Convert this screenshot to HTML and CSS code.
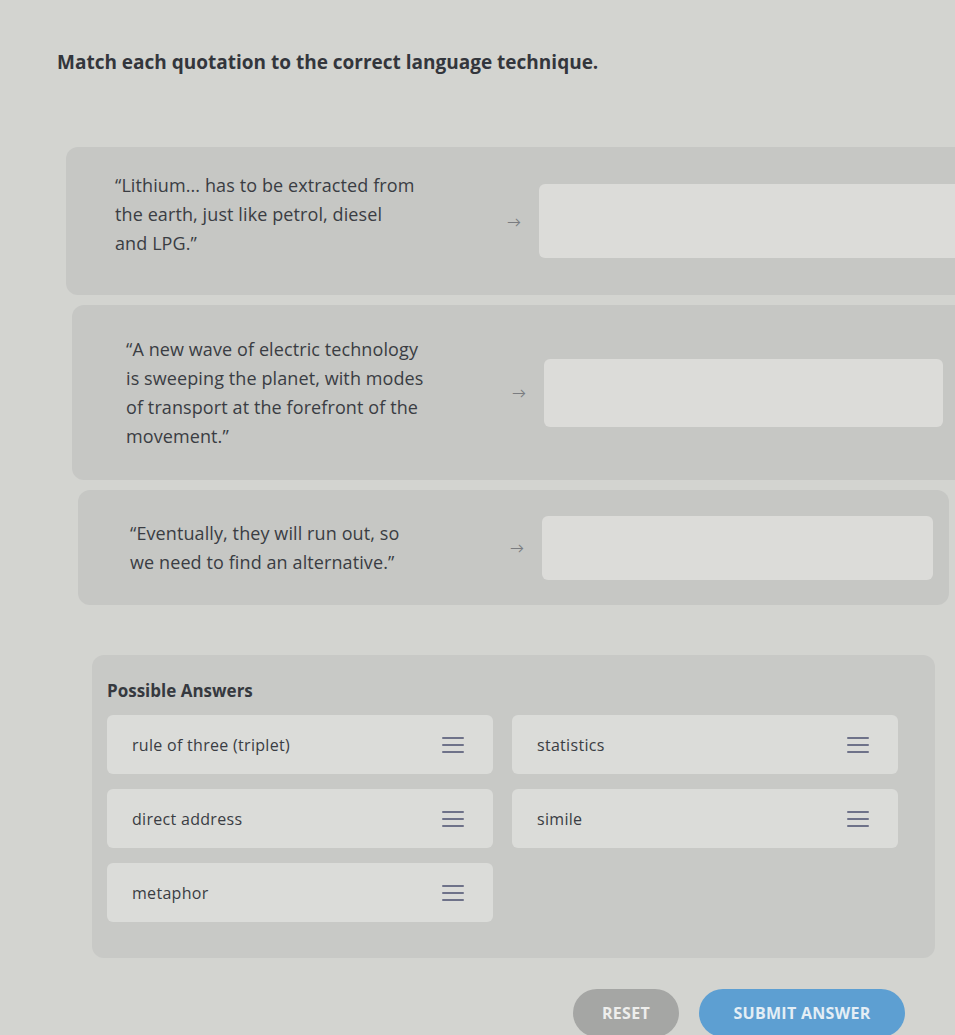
FILE: index.html
```html
<!DOCTYPE html>
<html>
<head>
<meta charset="utf-8">
<link rel="stylesheet" href="styles.css">
</head>
<body>
<div class="page">
  <h1 class="title">Match each quotation to the correct language technique.</h1>

  <div class="quotes">
    <div class="qcard q1">
      <div class="qtext">“Lithium... has to be extracted from<br>the earth, just like petrol, diesel<br>and LPG.”</div>
      <div class="arrow">&#8594;</div>
      <div class="drop"></div>
    </div>
    <div class="qcard q2">
      <div class="qtext">“A new wave of electric technology<br>is sweeping the planet, with modes<br>of transport at the forefront of the<br>movement.”</div>
      <div class="arrow">&#8594;</div>
      <div class="drop"></div>
    </div>
    <div class="qcard q3">
      <div class="qtext">“Eventually, they will run out, so<br>we need to find an alternative.”</div>
      <div class="arrow">&#8594;</div>
      <div class="drop"></div>
    </div>
  </div>

  <div class="answers">
    <div class="answers-title">Possible Answers</div>
    <div class="grid">
      <div class="item"><span>rule of three (triplet)</span><span class="handle"><i></i><i></i><i></i></span></div>
      <div class="item"><span>statistics</span><span class="handle"><i></i><i></i><i></i></span></div>
      <div class="item"><span>direct address</span><span class="handle"><i></i><i></i><i></i></span></div>
      <div class="item"><span>simile</span><span class="handle"><i></i><i></i><i></i></span></div>
      <div class="item"><span>metaphor</span><span class="handle"><i></i><i></i><i></i></span></div>
    </div>
  </div>

  <div class="buttons">
    <button class="btn reset">RESET</button>
    <button class="btn submit">SUBMIT ANSWER</button>
  </div>
</div>
</body>
</html>
```

FILE: styles.css
```css
html, body {
  margin: 0;
  padding: 0;
}
body {
  background: #d3d4d0;
  font-family: "Open Sans", "Lato", sans-serif;
  color: #3a3d43;
  overflow: hidden;
}
.page {
  width: 955px;
  height: 1035px;
  overflow: hidden;
  padding: 48px 0 0 0;
  box-sizing: border-box;
}
.title {
  margin: 0 0 0 57px;
  font-size: 19px;
  line-height: 28px;
  font-weight: 700;
  color: #33363c;
}
.quotes {
  margin-top: 71px;
  display: flex;
  flex-direction: column;
  gap: 10px;
}
.qcard {
  background: #c6c7c4;
  border-radius: 12px 0 0 12px;
  display: flex;
  align-items: center;
  box-sizing: border-box;
}
.q1 { margin-left: 66px; height: 148px; padding-left: 49px; }
.q2 { margin-left: 72px; height: 175px; padding-left: 54px; }
.q3 { margin-left: 78px; margin-right: 6px; border-radius: 12px; height: 115px; padding-left: 52px; }
.qtext {
  width: 392px;
  font-size: 18px;
  line-height: 29px;
  letter-spacing: 0.1px;
  color: #3a3d43;
}
.q1 .qtext { margin-bottom: 14px; }
.q2 .qtext { width: 386px; }
.q3 .qtext { width: 380px; }
.arrow {
  width: 32px;
  font-size: 14px;
  color: #7a7c80;
}
.drop {
  flex: 1;
  height: 74px;
  background: #dcdcd9;
  border-radius: 6px 0 0 6px;
}
.q2 .drop { height: 68px; margin-right: 12px; border-radius: 6px; }
.q3 .drop { height: 64px; margin-right: 16px; border-radius: 6px; }

.answers {
  margin: 50px 20px 0 92px;
  background: #c8c9c6;
  border-radius: 12px;
  padding: 24px 30px 38px 15px;
  height: 303px;
  box-sizing: border-box;
}
.answers-title {
  font-size: 17px;
  line-height: 24px;
  font-weight: 700;
  color: #36393f;
  margin-bottom: 12px;
}
.grid {
  display: grid;
  grid-template-columns: 386px 386px;
  column-gap: 19px;
  row-gap: 15px;
}
.item {
  background: #dbdcd9;
  border-radius: 6px;
  height: 59px;
  display: flex;
  align-items: center;
  justify-content: space-between;
  padding: 0 29px 0 25px;
  font-size: 16px;
  letter-spacing: 0.3px;
  color: #3a3d43;
}
.handle {
  display: flex;
  flex-direction: column;
  gap: 5px;
  width: 22px;
}
.handle i {
  display: block;
  height: 2px;
  background: #6e7289;
  border-radius: 1px;
}
.buttons {
  display: flex;
  gap: 20px;
  margin: 31px 0 0 573px;
}
.btn {
  border: none;
  border-radius: 24px;
  height: 48px;
  font-family: "Open Sans", "Lato", sans-serif;
  font-size: 16px;
  font-weight: 700;
  letter-spacing: 0.3px;
}
.reset {
  width: 106px;
  background: #a5a6a4;
  color: #eeeeec;
}
.submit {
  width: 206px;
  background: #5d9fd2;
  color: #e4eef5;
}
```
